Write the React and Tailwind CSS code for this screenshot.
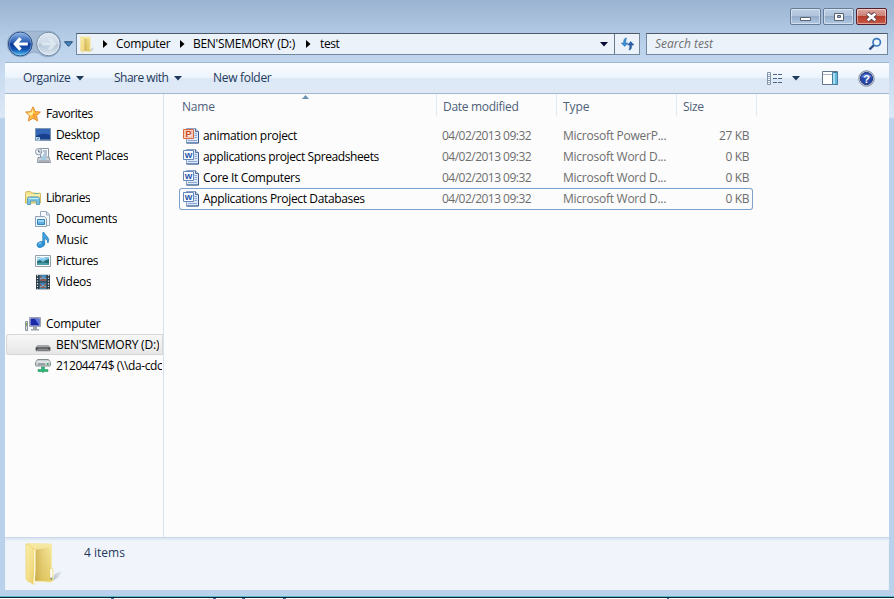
import React from 'react';
import clsx from 'clsx';

function BackIcon() {
  return (
    <svg width="70" height="28" viewBox="0 0 70 28">
      <defs>
        <linearGradient id="back" x1="0" y1="0" x2="0" y2="1">
          <stop offset="0" stopColor="#8fb6e6" />
          <stop offset=".42" stopColor="#2b5fb4" />
          <stop offset=".5" stopColor="#0c3593" />
          <stop offset=".75" stopColor="#1459b5" />
          <stop offset="1" stopColor="#5cd0f5" />
        </linearGradient>
        <linearGradient id="fwd" x1="0" y1="0" x2="0" y2="1">
          <stop offset="0" stopColor="#dfe8f1" />
          <stop offset=".48" stopColor="#cbd8e5" />
          <stop offset=".52" stopColor="#b6c6d8" />
          <stop offset="1" stopColor="#dbe7f1" />
        </linearGradient>
      </defs>
      <path d="M14 1.2a12.8 12.8 0 1 0 9 22q5-2.5 10 0a12.8 12.8 0 1 0 9-22Z" fill="#a4bad3" stroke="#8ea8c7" />
      <circle cx="14.3" cy="14" r="11.9" fill="url(#back)" stroke="#2b4f86" />
      <circle cx="14.3" cy="14" r="10.9" fill="none" stroke="#a5c8ef" strokeOpacity=".5" />
      <path d="m14.5 8.3-5.2 5.7 5.2 5.7M9.8 14h12" fill="none" stroke="#fff" strokeWidth="3.2" />
      <circle cx="42.4" cy="14" r="11.7" fill="url(#fwd)" stroke="#7089a8" />
      <circle cx="42.4" cy="14" r="10.6" fill="none" stroke="#edf4fa" strokeOpacity=".7" />
      <path d="m43 8.5 5.3 5.5-5.3 5.5M48 14H36" fill="none" stroke="#dde7f0" strokeWidth="3" />
      <path d="M58.5 11.8h8l-4 4.5Z" fill="#468bc4" stroke="#1d436e" />
    </svg>
  );
}

function Folder({ w = 16, h = 16 }) {
  return (
    <svg width={w} height={h} viewBox="0 0 40 44">
      <defs>
        <linearGradient id="fold" x1="0" y1="0" x2="0" y2="1">
          <stop offset="0" stopColor="#f7eaa4" />
          <stop offset="1" stopColor="#e3c85e" />
        </linearGradient>
        <linearGradient id="flap" x1="0" y1="0" x2="1" y2="1">
          <stop offset="0" stopColor="#fbf0ae" />
          <stop offset=".6" stopColor="#f3dc83" />
          <stop offset="1" stopColor="#e6c75c" />
        </linearGradient>
        <linearGradient id="inner">
          <stop offset="0" stopColor="#c5a544" stopOpacity=".75" />
          <stop offset="1" stopColor="#e9d27a" stopOpacity=".2" />
        </linearGradient>
        <linearGradient id="shade">
          <stop offset="0" stopColor="#8793a5" stopOpacity=".65" />
          <stop offset="1" stopColor="#8793a5" stopOpacity="0" />
        </linearGradient>
      </defs>
      <path d="m27 40 4-8 8-4-4 7-8 5Z" fill="url(#shade)" />
      <path d="m3 1.5 23 .5q1.500 0 1.500 1.500v22l1.500 2v11q-1 1.500-4 1.500l-14-1Z" fill="url(#fold)" stroke="#f4e9a9" />
      <path d="M11 8 26 5v33l-15 1Z" fill="url(#inner)" />
      <path d="M2 2q6 3 9 6v20l-1 14.500-7-4q-1-1-1-2Z" fill="url(#flap)" stroke="#ecd477" strokeWidth=".8" />
      <path d="M10.800 8v20l-.8 13.500" fill="none" stroke="#fffbe0" strokeWidth="1.300" />
      <path d="M27.300 27v10" stroke="#fff" strokeWidth="2" />
      <circle cx="27.300" cy="36.500" r="1" fill="#73867c" />
    </svg>
  );
}

const icons = {
  star: (
    <>
      <path d="m8 .8 2.200 4.800 5.200.5-3.900 3.600 1.200 5.200L8 12.300l-4.700 2.600 1.200-5.200L.6 6.100l5.200-.5Z" fill="#ffbd3d" stroke="#e08c34" strokeLinejoin="round" />
      <path d="M8 2.800 6.500 6.500 2.600 7l3 2.400L8 8Z" fill="#fff3a8" />
      <path d="m8 8 5-1-3 2.500 1 3.500-3-2Z" fill="#f7953a" />
    </>
  ),
  desktop: (
    <>
      <path d="M.5 1.500h15v12H.5Z" fill="#173f8e" stroke="#7f96b3" />
      <path d="M1 2h14v6Q8 5 1 9Z" fill="#3467b5" />
      <path d="M1 12.500h14" stroke="#5878a4" />
      <path d="M1 10h4v3.500H1Z" fill="#b9d6e9" />
      <path d="m2 12.500 2-2" stroke="#206394" />
    </>
  ),
  recent: (
    <>
      <path d="M5.500.5h8v11h-8Z" fill="#f8fafc" stroke="#8c96a0" />
      <path d="M8 3h4M9 5h3M8 7h4" stroke="#6d8fae" />
      <path d="m3 9.500 11-.5 1.500 5.500h-13Z" fill="#d1d6dc" stroke="#8c949d" />
      <path d="M6 8h5v4H6Z" fill="#a6cbe3" />
      <path d="M4 13h10" stroke="#858b91" />
      <circle cx="3.700" cy="3.700" r="3.200" fill="#edf2f7" stroke="#8b96a3" />
      <path d="M3.700 1.700V4h2" fill="none" stroke="#566d84" />
    </>
  ),
  libraries: (
    <>
      <path d="M.5 3.500q0-2 1-2h4l1 1.500h8q1 0 1 1v9H.5Z" fill="#f2df86" stroke="#d0bb62" />
      <path d="M1 5h14M10 2.500h4" stroke="#fff9d2" />
      <path d="M9 3.500h5" stroke="#6caf9d" />
      <path d="M2.500 14.500V9q0-2 2-2h8q2 0 2 2v5.500h-3V11h-6v3.500Z" fill="#78c4e3" stroke="#5b9fbb" />
      <path d="M3.500 8.500h10" stroke="#c6eef9" />
    </>
  ),
  documents: (
    <>
      <path d="M5.500.5h6l3 3v11h-9Z" fill="#f6f9fc" stroke="#9aabbc" />
      <path d="M11.500 1v3h3" fill="#dce6ef" stroke="#9aabbc" />
      <path d="M.5 5.500h9l2 2v8H.5Z" fill="#eef5fb" stroke="#8da2b7" />
      <path d="M2.500 8.500h7v5h-7Z" fill="#63aee1" stroke="#3686bd" />
      <path d="M3 9h6v2H3Z" fill="#9cd4f3" />
    </>
  ),
  music: (
    <>
      <ellipse cx="5.800" cy="12.400" rx="3.800" ry="2.700" fill="#3498dc" stroke="#2c86c9" transform="rotate(-20 5.800 12.400)" />
      <path d="M7.800 12V.6h1.400q.6 2 2.700 3.600 3.200 3 1 6.800.2-3.600-3.200-4.600V12Z" fill="#41a3e1" stroke="#2477b3" strokeWidth=".7" />
      <path d="M3.500 12q1.500-1.500 3-1" stroke="#a8dcf7" fill="none" />
    </>
  ),
  pictures: (
    <>
      <path d="M.5 2.500h15v11H.5Z" fill="#fff" stroke="#96a0aa" />
      <path d="M2 4h12v8H2Z" fill="#80c5e9" />
      <path d="M2 8.500 5 7l3 2 3-2 3-1v6H2Z" fill="#246e72" />
      <path d="M2 10q6-1 12 .5V12H2Z" fill="#4b9daa" />
      <path d="M2 6q4-2 8-1" stroke="#e5f5fa" fill="none" />
    </>
  ),
  videos: (
    <>
      <path d="M1 .8h14v14.500H1Z" fill="#28343d" />
      <path d="M2.500 1v14M13.500 1v14" stroke="#d8dfe3" strokeWidth="1.300" strokeDasharray="1.300 1.400" />
      <path d="M4.500 1h7v6.500h-7Zm0 7.500h7V15h-7Z" fill="#4386b5" />
      <path d="m5 1 3 4 3-2v4H5Zm0 9 3 2 3-3v5H5Z" fill="#8b574f" />
      <path d="M5 5q4-3 6 0M5 13q4-3 6 0" stroke="#80c3e7" fill="none" />
    </>
  ),
  computer: (
    <>
      <path d="M.5 5.500h2v9h-2Z" fill="#d5dce0" stroke="#8a949b" />
      <path d="M1.500 7v3" stroke="#7db04a" />
      <path d="M4.500 1.500h11v9h-11Z" fill="#c7ccd9" stroke="#9ca3b4" />
      <path d="M5.500 2.500h9v7h-9Z" fill="#1c28aa" />
      <path d="M10 3h4v6Z" fill="#5c79df" />
      <path d="M8 11h4v2h2v1.500H6V13h2Z" fill="#9ba1ab" />
    </>
  ),
  drive: (
    <>
      <path d="m3 8 10-.1 2.500 2.600v2.800q0 .8-1 .9H1.500q-1 0-1-1v-2.700Z" fill="#7a7d80" />
      <path d="m3 8 10-.1 2 2.400H1Z" fill="#a3a5a7" />
      <path d="M1 10.500h14V13H1Z" fill="#494b4d" />
      <path d="m1.500 14 2-1.800h9l2 1.800" stroke="#a9adb0" fill="none" />
    </>
  ),
  network: (
    <>
      <path d="M2.500 1.500h11l2 3v2.500q0 1-1 1h-13q-1 0-1-1V4.500Z" fill="#c8ced1" stroke="#858c90" />
      <path d="M1.500 4h13" stroke="#f6f8f9" />
      <path d="M3 6h7" stroke="#6d7478" />
      <circle cx="12.800" cy="6" r="1" fill="#37a45a" />
      <path d="M6.500 9h3v2.500H13v2H9.500l-1.500 1-1.500-1H3v-2h3.500Z" fill="#2bb677" stroke="#188953" strokeWidth=".5" />
    </>
  ),
};

function Icon({ name }) {
  return <svg className="shrink-0" width="16" height="16" viewBox="0 0 16 16">{icons[name]}</svg>;
}

function FileIcon({ kind }) {
  const ppt = kind === 'P';
  return (
    <svg className="shrink-0" width="17" height="16" viewBox="0 0 17 16">
      <path d="M3.500.5h9l3 3v11.500h-12Z" fill="#dce8f8" stroke="#8ba2c8" />
      <path d="M15.500 3.500v11.500H3.500" fill="none" stroke="#3b5a90" />
      <path d="M12.500.5v3h3" fill="#b9cbe5" stroke="#56709c" />
      <path d="M5 12.500h9M11.500 5.500H14M11.500 7.500H14M11.500 9.500H14" stroke="#8da9d4" />
      <path d="M.5 1.500h10v9H.5Z" fill={ppt ? '#fbe3d8' : '#fafdff'} stroke={ppt ? '#d8663f' : '#6787bb'} />
      {ppt && <path d="M2 3h7v6H2Z" fill="#fdf1e6" stroke="#e68e67" strokeWidth=".6" />}
      <text
        x="5.500"
        y="9"
        textAnchor="middle"
        fontFamily="Liberation Sans"
        fontSize={ppt ? 9 : 8}
        fontWeight="bold"
        fill={ppt ? '#cd421c' : '#1b4fa6'}
      >
        {kind}
      </text>
    </svg>
  );
}

function Down({ className }) {
  return <svg className={className} width="8" height="5" viewBox="0 0 8 5"><path d="M0 0h8L4 4.500Z" fill="currentColor" /></svg>;
}

function Crumb() {
  return <svg width="5" height="8" viewBox="0 0 5 8"><path d="m0 0 4.500 4L0 8Z" /></svg>;
}

function WindowButton({ close, children }) {
  return (
    <div
      className={clsx(
        'flex h-[17px] w-[31px] items-center justify-center rounded-[2px] border shadow-[inset_0_0_0_1px_#ffffff70]',
        close
          ? 'border-[#57202c] bg-[linear-gradient(#dda79f_0%,#cc8076_45%,#b63d2b_50%,#c75945_100%)]'
          : 'border-[#657c99] bg-[linear-gradient(#bfd0e4_0%,#afc3dc_45%,#95adca_50%,#b1c9e4_100%)]'
      )}
    >
      {children}
    </div>
  );
}

function TitleBar() {
  return (
    <div className="flex h-[33px] items-start justify-end gap-[2px] pt-2 pr-[7px]">
      <WindowButton>
        <svg width="13" height="12"><path d="M1.500 6.500h10v3h-10Z" fill="#fff" stroke="#59636f" /></svg>
      </WindowButton>
      <WindowButton>
        <svg width="12" height="12"><path d="M1.500 2.500h9v7h-9Z" fill="#fff" stroke="#59636f" /><path d="M4.500 4.500h3v2h-3Z" fill="#9cb0ca" stroke="#59636f" /></svg>
      </WindowButton>
      <WindowButton close>
        <svg width="13" height="12"><path d="m2.500 2.500 8 7m0-7-8 7" stroke="#5d4249" strokeWidth="4.400" /><path d="m2.700 2.700 7.600 6.600m0-6.600-7.600 6.600" stroke="#fff" strokeWidth="2.600" /></svg>
      </WindowButton>
    </div>
  );
}

function AddressBar() {
  return (
    <div className="flex h-[29px] items-start pl-[6px]">
      <div className="-mt-[3px] h-7 w-[70px]"><BackIcon /></div>
      <div className="flex h-[22px] w-[564px] items-center border border-[#75879e] border-t-[#4d596a] bg-[#ecf2fa] text-black">
        <div className="ml-[2px] w-[24px]"><Folder w={17} h={17} /></div>
        <Crumb />
        <span className="ml-2 w-[64px] tracking-[-0.25px]">Computer</span>
        <Crumb />
        <span className="ml-2 w-[113px] tracking-[-0.28px]">BEN'SMEMORY (D:)</span>
        <Crumb />
        <span className="ml-[9px] tracking-[-0.4px]">test</span>
        <Down className="mr-[6px] ml-auto text-[#080b32]" />
        <div className="flex h-full w-[25px] items-center justify-center border-l border-[#69798e]">
          <svg width="15" height="14" viewBox="0 0 15 14">
            <path d="M6.500 1Q3.500 1 3.500 6H1.200l3.500 3.500L8 6H5.700q0-3 .8-5Z" fill="#3b8ed6" stroke="#2c6ca9" strokeWidth=".5" />
            <path d="M9 13q2.800 0 2.800-5H14l-3.300-3.500L7.500 8h2.300q0 3-.8 5Z" fill="#2862ae" stroke="#2a578f" strokeWidth=".5" />
          </svg>
        </div>
      </div>
      <div className="ml-[6px] flex h-[22px] w-[242px] items-center justify-between border border-[#75879e] border-t-[#4d596a] bg-[#ecf2fa] pr-[5px] pl-2 text-[#6f6f70] italic">
        <span>Search test</span>
        <svg width="14" height="14" viewBox="0 0 14 14">
          <path d="m6 8-4.500 4.500" stroke="#2b4c86" strokeWidth="2.400" />
          <circle cx="8.700" cy="5.300" r="3.700" fill="#eef8ff" stroke="#3978bd" strokeWidth="1.700" />
        </svg>
      </div>
    </div>
  );
}

function Toolbar() {
  return (
    <div className="flex h-8 items-center border-t border-b border-t-[#9fb8d5] border-b-[#a3b7d1] bg-[linear-gradient(#fafdff_0%,#edf4fc_47%,#dde8f6_53%,#dfe9f6_100%)] pl-[18px] text-[#1e395b]">
      <span className="w-[53px] tracking-[-0.35px]">Organize</span>
      <Down />
      <span className="ml-[30px] w-[60px] tracking-[-0.5px]">Share with</span>
      <Down />
      <span className="ml-[31px] tracking-[-0.3px]">New folder</span>
      <div className="ml-auto flex items-center pr-[14px]">
        <svg width="16" height="13" viewBox="0 0 16 13">
          <path d="M.5.5h3v12h-3ZM.5 4.500h3M.5 8.500h3" fill="#fff" stroke="#8494a8" />
          <path d="M2 2v1m0 3v1m0 3v1" stroke="#397bbd" />
          <path d="M6 2.500h4m1 0h4m-9 4h4m1 0h4m-9 4h4m1 0h4" stroke="#496482" />
        </svg>
        <Down className="ml-[9px]" />
        <svg className="ml-[22px]" width="17" height="15" viewBox="0 0 17 15">
          <path d="M.5.5h15v13H.5Z" fill="#fff" stroke="#64768c" />
          <path d="M1 3.500h10" stroke="#a8b5c2" />
          <path d="M10.500 1.500h5v12h-5Z" fill="#65b9dc" stroke="#447e9f" />
          <path d="M11 2h2v11h-2Z" fill="#a9dcf0" />
        </svg>
        <svg className="ml-[19px]" width="17" height="17" viewBox="0 0 17 17">
          <circle cx="8.500" cy="8.500" r="7.700" fill="#d4dce9" stroke="#778396" />
          <circle cx="8.500" cy="8.500" r="6.100" fill="#2746a8" stroke="#1a317e" />
          <path d="M3 7a6 5 0 0 1 11 0Q9 9 3 7Z" fill="#577bd0" />
          <text x="8.500" y="12.500" textAnchor="middle" fontFamily="Liberation Sans" fontSize="11" fontWeight="bold" fill="#fff">?</text>
        </svg>
      </div>
    </div>
  );
}

const places = [
  { icon: 'star', label: 'Favorites', root: true, track: 'tracking-[-0.45px]' },
  { icon: 'desktop', label: 'Desktop', track: 'tracking-[-0.35px]' },
  { icon: 'recent', label: 'Recent Places', track: 'tracking-[-0.32px]' },
  null,
  { icon: 'libraries', label: 'Libraries', root: true, track: 'tracking-[-0.5px]' },
  { icon: 'documents', label: 'Documents', track: 'tracking-[-0.35px]' },
  { icon: 'music', label: 'Music', track: 'tracking-[-0.15px]' },
  { icon: 'pictures', label: 'Pictures', track: 'tracking-[-0.35px]' },
  { icon: 'videos', label: 'Videos', track: 'tracking-[-0.3px]' },
  null,
  { icon: 'computer', label: 'Computer', root: true, track: 'tracking-[-0.25px]' },
  { icon: 'drive', label: "BEN'SMEMORY (D:)", selected: true, track: 'tracking-[-0.2px]' },
  { icon: 'network', label: '21204474$ (\\\\da-cdc', track: 'tracking-[-0.4px]' },
];

function Sidebar() {
  return (
    <div className="w-[159px] shrink-0 overflow-hidden border-r border-[#d6e2f2] pt-[9px] text-black">
      {places.map((p, i) =>
        p ? (
          <div
            key={i}
            className={clsx(
              'ml-[1px] flex h-[21px] items-center gap-[5px] whitespace-nowrap',
              p.root ? 'pl-[19px]' : 'pl-[29px]',
              p.selected && 'rounded-l-[3px] bg-linear-to-b from-[#f8f8f8] to-[#e6e6e6] shadow-[inset_0_0_0_1px_#d7d7d7]'
            )}
          >
            <Icon name={p.icon} />
            <span className={clsx('overflow-hidden', p.track)}>{p.label}</span>
          </div>
        ) : (
          <div key={i} className="h-[21px]" />
        )
      )}
    </div>
  );
}

const files = [
  { kind: 'P', name: 'animation project', type: 'Microsoft PowerP...', size: '27 KB', track: 'tracking-[-0.3px]' },
  { kind: 'W', name: 'applications project Spreadsheets', type: 'Microsoft Word D...', size: '0 KB', track: 'tracking-[-0.4px]' },
  { kind: 'W', name: 'Core It Computers', type: 'Microsoft Word D...', size: '0 KB', track: 'tracking-[-0.32px]' },
  { kind: 'W', name: 'Applications Project Databases', type: 'Microsoft Word D...', size: '0 KB', track: 'tracking-[-0.35px]', selected: true },
];

function FileList() {
  const head = 'h-full border-r border-[#e1e9f3] pt-[5px] pl-[6px]';
  return (
    <div className="flex-1">
      <div className="relative flex h-[22px] text-[#4c607a]">
        <svg className="absolute top-[1px] left-[138px]" width="7" height="4"><path d="m0 4 3.500-4L7 4Z" fill="#6790b3" /></svg>
        <div className="w-[273px] border-r border-[#e1e9f3] pt-[5px] pl-[18px] tracking-[-0.2px]">Name</div>
        <div className={clsx('w-[120px] tracking-[-0.3px]', head)}>Date modified</div>
        <div className={clsx('w-[120px] tracking-[-0.1px]', head)}>Type</div>
        <div className={clsx('w-[80px] tracking-[-0.3px]', head)}>Size</div>
      </div>
      <div className="pt-[9px] pl-[15px]">
        {files.map((f) => (
          <div
            key={f.name}
            className={clsx(
              'flex h-[21px] w-[574px] items-center pl-1 whitespace-nowrap text-[#6d6d6d]',
              f.selected && 'h-[22px] rounded-[3px] shadow-[inset_0_0_0_1px_#7da2ce]'
            )}
          >
            <FileIcon kind={f.kind} />
            <span className={clsx('ml-[3px] w-[239px] text-black', f.track)}>{f.name}</span>
            <span className="w-[121px] tracking-[-0.52px]">04/02/2013 09:32</span>
            <span className="w-[120px] tracking-[-0.25px]">{f.type}</span>
            <span className="ml-auto pr-1 tracking-[-0.4px]">{f.size}</span>
          </div>
        ))}
      </div>
    </div>
  );
}

export default function App() {
  return (
    <div className="flex h-[599px] w-[894px] flex-col overflow-hidden bg-white font-['Open_Sans',sans-serif] text-[12px] leading-4">
      <div className="flex h-[596px] flex-col bg-[linear-gradient(#9ab4d1_0px,#a5bdd9_15px,#b9d1ea_45px,#c4d8ee_65px,#dce8f6_117px,#b9d1ea_119px)]">
        <TitleBar />
        <AddressBar />
        <div className="mx-[5px] flex h-[528px] flex-col">
          <Toolbar />
          <div className="flex h-[443px] bg-[#fcfcfc]">
            <Sidebar />
            <FileList />
          </div>
          <div className="flex h-[53px] border-t border-[#c9d7e8] bg-[#f1f5fb] shadow-[inset_0_2px_2px_#dce6f2]">
            <div className="mt-[4px] ml-[19px] w-[60px]"><Folder w={40} h={44} /></div>
            <span className="pt-[7px] text-[#1e395b]">4 items</span>
          </div>
        </div>
      </div>
      <div className="h-px bg-[#5abccd]" />
      <div className="h-px bg-[#10242d]" />
      <div className="flex h-px pl-[111px]">
        <div className="mr-[99px] h-px w-[3px] bg-[#3e70a5]" />
        <div className="mr-[26px] h-px w-[3px] bg-[#3e70a5]" />
        <div className="mr-[38px] h-px w-[3px] bg-[#3e70a5]" />
        <div className="mr-[381px] h-px w-[3px] bg-[#3e70a5]" />
        <div className="h-px w-[2px] bg-[#3e70a5]" />
      </div>
    </div>
  );
}
